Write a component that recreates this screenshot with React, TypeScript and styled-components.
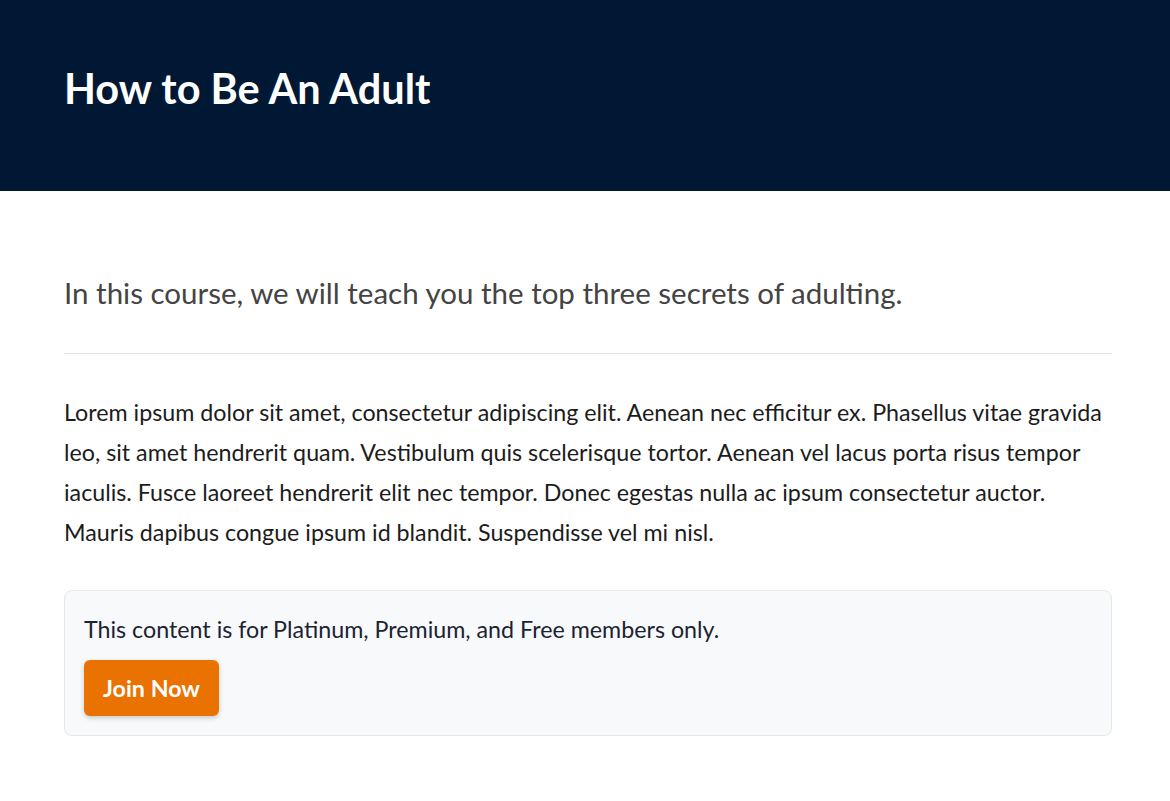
import styled, { createGlobalStyle } from 'styled-components';

const GlobalStyle = createGlobalStyle`
    body {
        margin: 0;
        background: #ffffff;
        font-family: Lato, "Noto Sans", sans-serif;
    }
`;

const Header = styled.header`
    background: #001833;
    height: 191px;
    box-sizing: border-box;
    padding: 64px 64px 0;
`;

const Title = styled.h1`
    margin: 0;
    color: #ffffff;
    font-size: 41.5px;
    line-height: 48px;
    font-weight: 700;
`;

const Main = styled.main`
    width: 1048px;
    margin-left: 64px;
    padding-top: 84px;
`;

const Lead = styled.p`
    margin: 0;
    font-size: 29.5px;
    line-height: 36px;
    color: #444444;
`;

const Divider = styled.hr`
    margin: 42px 0 38px;
    border: 0;
    border-top: 1px solid #e3e6e8;
`;

const Body = styled.p`
    margin: 0;
    font-size: 23.25px;
    line-height: 40px;
    color: #1c1c1c;
`;

const Notice = styled.div`
    margin-top: 38px;
    background: #f8f9fb;
    border: 1px solid #e5e7ea;
    border-radius: 8px;
    padding: 20px 19px 19px;
    display: flex;
    flex-direction: column;
    align-items: flex-start;
    gap: 13px;
`;

const NoticeText = styled.p`
    margin: 0;
    font-size: 23.25px;
    line-height: 36px;
    color: #1b2333;
`;

const JoinButton = styled.button`
    font-family: inherit;
    background: #ea7200;
    color: #ffffff;
    font-size: 23.25px;
    font-weight: 700;
    height: 56px;
    padding: 0 19px;
    border: 0;
    border-radius: 6px;
    box-shadow: 0 2px 5px rgba(0, 0, 0, 0.2);
    cursor: pointer;
`;

export default function App() {
    return (
        <>
            <GlobalStyle />
            <Header>
                <Title>How to Be An Adult</Title>
            </Header>
            <Main>
                <Lead>In this course, we will teach you the top three secrets of adulting.</Lead>
                <Divider />
                <Body>
                    Lorem ipsum dolor sit amet, consectetur adipiscing elit. Aenean nec efficitur ex. Phasellus vitae gravida
                    leo, sit amet hendrerit quam. Vestibulum quis scelerisque tortor. Aenean vel lacus porta risus tempor
                    iaculis. Fusce laoreet hendrerit elit nec tempor. Donec egestas nulla ac ipsum consectetur auctor.
                    Mauris dapibus congue ipsum id blandit. Suspendisse vel mi nisl.
                </Body>
                <Notice>
                    <NoticeText>This content is for Platinum, Premium, and Free members only.</NoticeText>
                    <JoinButton>Join Now</JoinButton>
                </Notice>
            </Main>
        </>
    );
}
